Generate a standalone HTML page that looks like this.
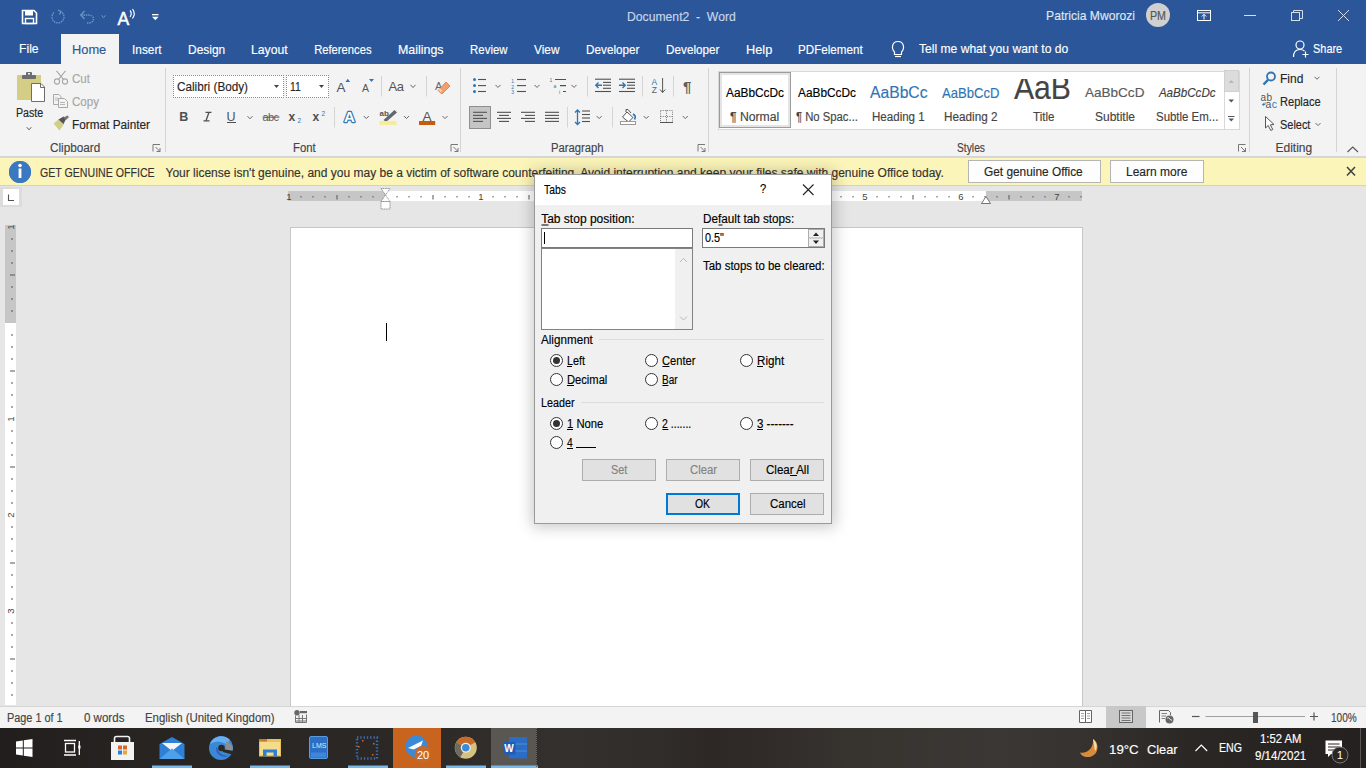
<!DOCTYPE html>
<html><head><meta charset="utf-8"><title>Document2 - Word</title>
<style>
html,body{margin:0;padding:0}
body{width:1366px;height:768px;overflow:hidden;position:relative;background:#e6e6e6;font-family:"Liberation Sans",sans-serif}
svg{overflow:visible}
div{-webkit-text-stroke:0.15px currentColor}
</style></head><body>
<div style="position:absolute;left:0px;top:0px;width:1366px;height:64px;background:#2b579a"></div>
<div style="position:absolute;left:61px;top:34px;width:58px;height:30px;background:#f3f3f3"></div>
<div style="position:absolute;left:627.00px;top:6.50px;line-height:20px;font:normal 400 13px/20px 'Liberation Sans';color:#c9d6ea;white-space:pre;transform:scaleX(0.9360);transform-origin:1.00px 0;">Document2  -  Word</div>
<div style="position:absolute;left:1046.00px;top:6.00px;line-height:20px;font:normal 400 13px/20px 'Liberation Sans';color:#dfe7f2;white-space:pre;transform:scaleX(0.9315);transform-origin:1.00px 0;">Patricia Mworozi</div>
<div style="position:absolute;left:1146px;top:3px;width:24px;height:24px;border-radius:50%;background:#d0d0d0"></div>
<div style="position:absolute;left:1150.00px;top:6.50px;line-height:18px;font:normal 400 12px/18px 'Liberation Sans';color:#555;white-space:pre;transform:scaleX(0.8887);transform-origin:-0.00px 0;">PM</div>
<div style="position:absolute;left:19.00px;top:38.50px;line-height:20px;font:normal 400 13px/20px 'Liberation Sans';color:#ffffff;white-space:pre;transform:scaleX(0.9332);transform-origin:1.00px 0;">File</div>
<div style="position:absolute;left:132.00px;top:39.70px;line-height:20px;font:normal 400 13px/20px 'Liberation Sans';color:#ffffff;white-space:pre;transform:scaleX(0.9091);transform-origin:1.00px 0;">Insert</div>
<div style="position:absolute;left:188.00px;top:39.70px;line-height:20px;font:normal 400 13px/20px 'Liberation Sans';color:#ffffff;white-space:pre;transform:scaleX(0.9175);transform-origin:1.00px 0;">Design</div>
<div style="position:absolute;left:251.00px;top:39.70px;line-height:20px;font:normal 400 13px/20px 'Liberation Sans';color:#ffffff;white-space:pre;transform:scaleX(0.9370);transform-origin:1.00px 0;">Layout</div>
<div style="position:absolute;left:314.00px;top:39.70px;line-height:20px;font:normal 400 13px/20px 'Liberation Sans';color:#ffffff;white-space:pre;transform:scaleX(0.8639);transform-origin:1.00px 0;">References</div>
<div style="position:absolute;left:398.00px;top:39.70px;line-height:20px;font:normal 400 13px/20px 'Liberation Sans';color:#ffffff;white-space:pre;transform:scaleX(0.9537);transform-origin:1.00px 0;">Mailings</div>
<div style="position:absolute;left:470.00px;top:39.70px;line-height:20px;font:normal 400 13px/20px 'Liberation Sans';color:#ffffff;white-space:pre;transform:scaleX(0.8760);transform-origin:1.00px 0;">Review</div>
<div style="position:absolute;left:534.00px;top:39.70px;line-height:20px;font:normal 400 13px/20px 'Liberation Sans';color:#ffffff;white-space:pre;transform:scaleX(0.9105);transform-origin:-0.00px 0;">View</div>
<div style="position:absolute;left:586.00px;top:39.70px;line-height:20px;font:normal 400 13px/20px 'Liberation Sans';color:#ffffff;white-space:pre;transform:scaleX(0.8994);transform-origin:1.00px 0;">Developer</div>
<div style="position:absolute;left:666.00px;top:39.70px;line-height:20px;font:normal 400 13px/20px 'Liberation Sans';color:#ffffff;white-space:pre;transform:scaleX(0.8994);transform-origin:1.00px 0;">Developer</div>
<div style="position:absolute;left:746.00px;top:39.70px;line-height:20px;font:normal 400 13px/20px 'Liberation Sans';color:#ffffff;white-space:pre;transform:scaleX(0.9801);transform-origin:1.00px 0;">Help</div>
<div style="position:absolute;left:798.00px;top:39.70px;line-height:20px;font:normal 400 13px/20px 'Liberation Sans';color:#ffffff;white-space:pre;transform:scaleX(0.8934);transform-origin:1.00px 0;">PDFelement</div>
<div style="position:absolute;left:72.00px;top:39.70px;line-height:20px;font:normal 400 13px/20px 'Liberation Sans';color:#2b579a;white-space:pre;transform:scaleX(0.9866);transform-origin:1.00px 0;">Home</div>
<div style="position:absolute;left:918.50px;top:39.00px;line-height:20px;font:normal 400 13px/20px 'Liberation Sans';color:#ffffff;white-space:pre;transform:scaleX(0.9302);transform-origin:-0.00px 0;">Tell me what you want to do</div>
<div style="position:absolute;left:1313.00px;top:39.00px;line-height:20px;font:normal 400 13px/20px 'Liberation Sans';color:#ffffff;white-space:pre;transform:scaleX(0.8416);transform-origin:-0.00px 0;">Share</div>
<div style="position:absolute;left:0px;top:64px;width:1366px;height:92px;background:#f3f3f3"></div>
<div style="position:absolute;left:0px;top:156px;width:1366px;height:1px;background:#d5d5d5"></div>
<div style="position:absolute;left:165px;top:68px;width:1px;height:84px;background:#d4d4d4"></div>
<div style="position:absolute;left:460px;top:68px;width:1px;height:84px;background:#d4d4d4"></div>
<div style="position:absolute;left:708px;top:68px;width:1px;height:84px;background:#d4d4d4"></div>
<div style="position:absolute;left:1249px;top:68px;width:1px;height:84px;background:#d4d4d4"></div>
<div style="position:absolute;left:1336px;top:68px;width:1px;height:84px;background:#d4d4d4"></div>
<div style="position:absolute;left:49.70px;top:139.00px;line-height:18px;font:normal 400 12px/18px 'Liberation Sans';color:#444;white-space:pre;transform:scaleX(0.9785);transform-origin:-0.00px 0;">Clipboard</div>
<div style="position:absolute;left:293.30px;top:139.00px;line-height:18px;font:normal 400 12px/18px 'Liberation Sans';color:#444;white-space:pre;transform:scaleX(0.9442);transform-origin:-0.00px 0;">Font</div>
<div style="position:absolute;left:550.50px;top:139.00px;line-height:18px;font:normal 400 12px/18px 'Liberation Sans';color:#444;white-space:pre;transform:scaleX(0.9392);transform-origin:-0.00px 0;">Paragraph</div>
<div style="position:absolute;left:956.50px;top:139.00px;line-height:18px;font:normal 400 12px/18px 'Liberation Sans';color:#444;white-space:pre;transform:scaleX(0.8569);transform-origin:-0.00px 0;">Styles</div>
<div style="position:absolute;left:1275.50px;top:139.00px;line-height:18px;font:normal 400 12px/18px 'Liberation Sans';color:#444;white-space:pre;">Editing</div>
<div style="position:absolute;left:15.50px;top:104.00px;line-height:18px;font:normal 400 12px/18px 'Liberation Sans';color:#262626;white-space:pre;transform:scaleX(0.8868);transform-origin:-0.00px 0;">Paste</div>
<div style="position:absolute;left:72.40px;top:69.50px;line-height:18px;font:normal 400 12px/18px 'Liberation Sans';color:#a6a6a6;white-space:pre;transform:scaleX(0.9566);transform-origin:-0.00px 0;">Cut</div>
<div style="position:absolute;left:72.40px;top:93.00px;line-height:18px;font:normal 400 12px/18px 'Liberation Sans';color:#a6a6a6;white-space:pre;transform:scaleX(0.9638);transform-origin:-0.00px 0;">Copy</div>
<div style="position:absolute;left:72.40px;top:116.00px;line-height:18px;font:normal 400 12px/18px 'Liberation Sans';color:#262626;white-space:pre;transform:scaleX(0.9828);transform-origin:-0.00px 0;">Format Painter</div>
<div style="position:absolute;left:173px;top:75px;width:109px;height:21px;background:#fff;border:1px dotted #8a8a8a"></div>
<div style="position:absolute;left:286px;top:75px;width:41px;height:21px;background:#fff;border:1px dotted #8a8a8a"></div>
<div style="position:absolute;left:176.50px;top:77.50px;line-height:18px;font:normal 400 12px/18px 'Liberation Sans';color:#262626;white-space:pre;transform:scaleX(0.9768);transform-origin:-0.00px 0;">Calibri (Body)</div>
<div style="position:absolute;left:289.60px;top:77.50px;line-height:18px;font:normal 400 12px/18px 'Liberation Sans';color:#262626;white-space:pre;transform:scaleX(0.8605);transform-origin:-0.00px 0;">11</div>
<div style="position:absolute;left:718px;top:71px;width:506px;height:57px;background:#fff;border:1px solid #d8d8d8"></div>
<div style="position:absolute;left:1224px;top:71px;width:14px;height:57px;background:#fff;border:1px solid #d8d8d8"></div>
<div style="position:absolute;left:719px;top:72px;width:70px;height:54px;border:1px solid #9c9c9c;box-shadow:inset 0 0 0 2px #e4e4e4"></div>
<div style="position:absolute;left:725.90px;top:83.50px;line-height:18px;font:normal 400 12px/18px 'Liberation Sans';color:#000;white-space:pre;transform:scaleX(0.9883);transform-origin:-0.00px 0;">AaBbCcDc</div>
<div style="position:absolute;left:797.70px;top:83.50px;line-height:18px;font:normal 400 12px/18px 'Liberation Sans';color:#000;white-space:pre;transform:scaleX(0.9883);transform-origin:-0.00px 0;">AaBbCcDc</div>
<div style="position:absolute;left:869.70px;top:79.50px;line-height:26px;font:normal 400 17px/26px 'Liberation Sans';color:#2e74b5;white-space:pre;transform:scaleX(0.9226);transform-origin:-0.00px 0;">AaBbCc</div>
<div style="position:absolute;left:941.80px;top:81.50px;line-height:22px;font:normal 400 15px/22px 'Liberation Sans';color:#2e74b5;white-space:pre;transform:scaleX(0.8709);transform-origin:-0.00px 0;">AaBbCcD</div>
<div style="position:absolute;left:1000px;top:78.5px;width:80px;height:30px;overflow:hidden">
<div style="position:absolute;left:13.50px;top:-16.00px;line-height:50px;font:normal 400 33px/50px 'Liberation Sans';color:#444;white-space:pre;transform:scaleX(0.9126);transform-origin:-0.00px 0;">AaB</div>
</div>
<div style="position:absolute;left:1085.40px;top:82.50px;line-height:20px;font:normal 400 13px/20px 'Liberation Sans';color:#5a5a5a;white-space:pre;transform:scaleX(1.0407);transform-origin:-0.00px 0;">AaBbCcD</div>
<div style="position:absolute;left:1159.00px;top:82.50px;line-height:20px;font:italic 400 13px/20px 'Liberation Sans';color:#404040;white-space:pre;transform:scaleX(0.8912);transform-origin:-1.00px 0;">AaBbCcDc</div>
<div style="position:absolute;left:730.00px;top:107.70px;line-height:18px;font:normal 400 12px/18px 'Liberation Sans';color:#444;white-space:pre;transform:scaleX(1.0171);transform-origin:-0.00px 0;">¶ Normal</div>
<div style="position:absolute;left:796.00px;top:107.70px;line-height:18px;font:normal 400 12px/18px 'Liberation Sans';color:#444;white-space:pre;transform:scaleX(0.9409);transform-origin:-0.00px 0;">¶ No Spac...</div>
<div style="position:absolute;left:872.00px;top:107.70px;line-height:18px;font:normal 400 12px/18px 'Liberation Sans';color:#444;white-space:pre;transform:scaleX(0.9630);transform-origin:-0.00px 0;">Heading 1</div>
<div style="position:absolute;left:944.40px;top:107.70px;line-height:18px;font:normal 400 12px/18px 'Liberation Sans';color:#444;white-space:pre;transform:scaleX(0.9776);transform-origin:-0.00px 0;">Heading 2</div>
<div style="position:absolute;left:1032.50px;top:108.00px;line-height:18px;font:normal 400 12px/18px 'Liberation Sans';color:#444;white-space:pre;transform:scaleX(0.9623);transform-origin:-0.00px 0;">Title</div>
<div style="position:absolute;left:1095.00px;top:108.00px;line-height:18px;font:normal 400 12px/18px 'Liberation Sans';color:#444;white-space:pre;">Subtitle</div>
<div style="position:absolute;left:1155.80px;top:108.00px;line-height:18px;font:normal 400 12px/18px 'Liberation Sans';color:#444;white-space:pre;transform:scaleX(0.9534);transform-origin:-0.00px 0;">Subtle Em...</div>
<div style="position:absolute;left:1280.00px;top:70.00px;line-height:18px;font:normal 400 12px/18px 'Liberation Sans';color:#262626;white-space:pre;">Find</div>
<div style="position:absolute;left:1280.00px;top:93.00px;line-height:18px;font:normal 400 12px/18px 'Liberation Sans';color:#262626;white-space:pre;transform:scaleX(0.9244);transform-origin:-0.00px 0;">Replace</div>
<div style="position:absolute;left:1280.00px;top:115.60px;line-height:18px;font:normal 400 12px/18px 'Liberation Sans';color:#262626;white-space:pre;transform:scaleX(0.9113);transform-origin:-0.00px 0;">Select</div>
<svg style="position:absolute;left:0;top:0" width="1366" height="768" viewBox="0 0 1366 768"><path d="M22.5 10.5 H34 L36.5 13 V23.5 H22.5 Z" fill="none" stroke="#fff" stroke-width="1.6"/><rect x="25" y="11" width="8" height="4.5" fill="#fff"/><rect x="25.5" y="18.5" width="8" height="5" fill="none" stroke="#fff" stroke-width="1.4"/><path d="M54 12.5 A6 6 0 1 0 60.5 11.5" fill="none" stroke="#6f94c7" stroke-width="1.3" stroke-dasharray="1.6 0.8"/><path d="M58 10 L61 11.5 L59.5 14.5" fill="none" stroke="#6f94c7" stroke-width="1.3"/><path d="M81 15 H89 A4.5 4 0 0 1 89 23 H87" fill="none" stroke="#6f94c7" stroke-width="1.3" stroke-dasharray="1.6 0.8"/><path d="M84.5 11 L80.8 15 L84.5 19" fill="none" stroke="#6f94c7" stroke-width="1.3"/><path d="M101.5 15.25 L103.5 17.75 L105.5 15.25" fill="none" stroke="#6f94c7" stroke-width="1"/><text x="117.5" y="25" font-family="Liberation Sans" font-size="17.5" fill="#fff" stroke="#fff" stroke-width="0.5">A</text><path d="M130 10.5 Q132.5 13.5 130 17" fill="none" stroke="#fff" stroke-width="1.2"/><path d="M132.5 9 Q136 13.5 132.5 18.5" fill="none" stroke="#fff" stroke-width="1.2"/><rect x="152" y="14" width="6.5" height="1.3" fill="#fff"/><path d="M152 16.8 H158.6 L155.3 20.2 Z" fill="#fff"/><rect x="1197.5" y="10.5" width="13" height="10" fill="none" stroke="#fff" stroke-width="1"/><path d="M1197.5 12.8 H1210.5" stroke="#fff" stroke-width="1"/><path d="M1204 19.5 V14.5 M1201.8 16.5 L1204 14.3 L1206.2 16.5" fill="none" stroke="#fff" stroke-width="1"/><path d="M1244 15.5 H1256" stroke="#d6deeb" stroke-width="1"/><rect x="1291.5" y="12.5" width="8" height="8" fill="none" stroke="#d6deeb" stroke-width="1"/><path d="M1293.5 12.5 V10.5 H1302.5 V18.5 H1299.5" fill="none" stroke="#d6deeb" stroke-width="1"/><path d="M1338 10 L1349 21 M1349 10 L1338 21" stroke="#d6deeb" stroke-width="1"/><path d="M894.5 52 C891 48.5 892 41.5 898 41.5 C904 41.5 905 48.5 901.5 52 V54.5 H894.5 Z" fill="none" stroke="#fff" stroke-width="1.2"/><path d="M895 56.5 H901" stroke="#fff" stroke-width="1.2"/><circle cx="1300" cy="45" r="4" fill="none" stroke="#fff" stroke-width="1.2"/><path d="M1293.5 57 C1293.5 51.5 1296.5 49.5 1300 49.5 C1302 49.5 1303.5 50 1304.5 51" fill="none" stroke="#fff" stroke-width="1.2"/><path d="M1305.5 51.5 V57.5 M1302.5 54.5 H1308.5" stroke="#fff" stroke-width="1.2"/><rect x="17" y="75" width="24" height="25" fill="#d4cd86"/><rect x="22" y="75" width="14" height="4" rx="1" fill="#6d6d6d"/><rect x="26" y="72" width="6" height="4" rx="1" fill="#6d6d6d"/><rect x="28" y="73" width="2" height="1.5" fill="#f3f3f3"/><path d="M31.5 83.5 H41 L44.5 87 V101.5 H31.5 Z" fill="#fff" stroke="#6d6d6d" stroke-width="1"/><path d="M40.5 83.5 V87.5 H44.5" fill="none" stroke="#6d6d6d" stroke-width="1"/><path d="M26.75 127.25 L29 129.75 L31.25 127.25" fill="none" stroke="#555" stroke-width="1"/><g fill="none" stroke="#a8a8a8" stroke-width="1.1"><circle cx="57" cy="81.5" r="2.6"/><circle cx="65" cy="81.5" r="2.6"/><path d="M58.5 79.3 L65.5 70.8 M63.5 79.3 L56.5 70.8"/></g><g fill="#f3f3f3" stroke="#a8a8a8" stroke-width="1"><path d="M53.5 94.5 H59 L61 96.5 V104.5 H53.5 Z"/><path d="M58.5 98.5 H64.5 L67.5 101.5 V107.5 H58.5 Z"/></g><path d="M55 98 H58 M55 100 H58 M60 102.5 H65 M60 104.5 H65" stroke="#a8a8a8" stroke-width="0.8"/><path d="M53.5 123.5 L59 119 L64 124 L59.5 130.5 Z" fill="#d4cd86"/><path d="M58.5 119.5 L63.5 116.5 L66 119 L63.5 124 Z" fill="#555"/><path d="M63.5 117.5 L67.5 115.5 L69 117 L66 120 Z" fill="#777"/><path d="M274 85 H279 L276.5 88 Z" fill="#444"/><path d="M319 85 H324 L321.5 88 Z" fill="#444"/><text x="336.5" y="92" font-family="Liberation Sans" font-size="13.5" fill="#555">A</text><path d="M345.5 82 L347.8 78.8 L350.1 82 Z" fill="#2e75b6"/><text x="362" y="92" font-family="Liberation Sans" font-size="10.5" fill="#555">A</text><path d="M369 79 H374 L371.5 82 Z" fill="#2e75b6"/><text x="388.5" y="90.5" font-family="Liberation Sans" font-size="13" fill="#555" textLength="15.5">Aa</text><path d="M410.5 84.8 L413 87.60000000000001 L415.5 84.8" fill="none" stroke="#666" stroke-width="1"/><text x="435" y="90" font-family="Liberation Sans" font-size="11" fill="#666">A</text><path d="M438 90.5 L446 82 L450 86 L442 94 Z" fill="#f0a070" stroke="#e07b3a" stroke-width="0.8"/><path d="M439 89 L441.5 91.5" stroke="#e9d9b0" stroke-width="2"/><text x="179.2" y="121" font-family="Liberation Sans" font-weight="700" font-size="12.5" fill="#505050">B</text><path d="M205.5 112.3 H211.5 M203.5 120.8 H209.5 M209 112.3 L206 120.8" fill="none" stroke="#505050" stroke-width="1.3"/><text x="226.5" y="120.8" font-family="Liberation Sans" font-size="12.5" fill="#505050">U</text><path d="M227 122.5 H236" stroke="#505050" stroke-width="1"/><path d="M247.5 116.25 L250 118.75 L252.5 116.25" fill="none" stroke="#666" stroke-width="1"/><text x="262.5" y="120.8" font-family="Liberation Sans" font-size="11" fill="#606060" textLength="16.5">abc</text><path d="M262.5 117.2 H279.5" stroke="#606060" stroke-width="1"/><text x="288.5" y="121" font-family="Liberation Sans" font-weight="700" font-size="12" fill="#505050">x</text><text x="297.5" y="123.3" font-family="Liberation Sans" font-size="6.5" fill="#2e75b6">2</text><text x="312.5" y="121" font-family="Liberation Sans" font-weight="700" font-size="12" fill="#505050">x</text><text x="321.5" y="115.5" font-family="Liberation Sans" font-size="6.5" fill="#2e75b6">2</text><path d="M334.5 107 V127.5" stroke="#d4d4d4" stroke-width="1"/><path d="M381.5 76 V96.5 M426.5 76 V96.5" stroke="#d4d4d4" stroke-width="1"/><text x="344" y="122" font-family="Liberation Sans" font-weight="700" font-size="15" fill="#fff" stroke="#2e75b6" stroke-width="2.4" stroke-linejoin="round" paint-order="stroke" textLength="11.5">A</text><path d="M363.8 116.05 L366.3 118.55 L368.8 116.05" fill="none" stroke="#666" stroke-width="1"/><text x="379.5" y="115.5" font-family="Liberation Sans" font-weight="700" font-size="8" fill="#555">ab</text><path d="M383.5 120 L394.5 110 L397 112.5 L386 122 Z" fill="#666"/><rect x="379.5" y="121" width="17" height="4" fill="#f6ec9c"/><path d="M404.0 116.05 L406.5 118.55 L409.0 116.05" fill="none" stroke="#666" stroke-width="1"/><text x="422.5" y="120.5" font-family="Liberation Sans" font-size="13.5" fill="#555">A</text><rect x="419" y="121" width="16.2" height="4" fill="#c55a11"/><path d="M442.5 116.05 L445 118.55 L447.5 116.05" fill="none" stroke="#666" stroke-width="1"/><path d="M451 151.5 V144.5 H458" fill="none" stroke="#777" stroke-width="1"/><path d="M453.5 147.0 L458 151.5 M458 148.0 V151.5 H454.5" fill="none" stroke="#777" stroke-width="1"/><circle cx="474.5" cy="79.5" r="1.5" fill="#2e75b6"/><circle cx="474.5" cy="85.6" r="1.5" fill="#2e75b6"/><circle cx="474.5" cy="91.5" r="1.5" fill="#2e75b6"/><path d="M478 79.5 H486" stroke="#505050" stroke-width="1.1"/><path d="M478 85.6 H486" stroke="#505050" stroke-width="1.1"/><path d="M478 91.5 H486" stroke="#505050" stroke-width="1.1"/><path d="M495.5 84.95 L498 87.45 L500.5 84.95" fill="none" stroke="#666" stroke-width="1"/><text x="511.3" y="82.5" font-family="Liberation Sans" font-size="5" fill="#2e75b6">1</text><text x="511.3" y="88.5" font-family="Liberation Sans" font-size="5" fill="#2e75b6">2</text><text x="511.3" y="94" font-family="Liberation Sans" font-size="5" fill="#2e75b6">3</text><path d="M517 79.5 H526" stroke="#505050" stroke-width="1.1"/><path d="M517 85.6 H526" stroke="#505050" stroke-width="1.1"/><path d="M517 91.5 H526" stroke="#505050" stroke-width="1.1"/><path d="M534.5 84.95 L537 87.45 L539.5 84.95" fill="none" stroke="#666" stroke-width="1"/><text x="549.5" y="82" font-family="Liberation Sans" font-size="5" fill="#2e75b6">1</text><text x="553.5" y="88" font-family="Liberation Sans" font-size="5" fill="#2e75b6">a</text><text x="559" y="94" font-family="Liberation Sans" font-size="5" fill="#2e75b6">i</text><path d="M555 79.5 H566 M560 85.6 H566 M563 91.5 H566" stroke="#505050" stroke-width="1.1"/><path d="M571.5 84.95 L574 87.45 L576.5 84.95" fill="none" stroke="#666" stroke-width="1"/><path d="M587.5 76 V96.5 M642.5 76 V96.5 M673.5 76 V96.5" stroke="#d4d4d4" stroke-width="1"/><path d="M595 79.2 H611" stroke="#505050" stroke-width="1.1"/><path d="M595 91.5 H611" stroke="#505050" stroke-width="1.1"/><path d="M603 82.4 H611" stroke="#505050" stroke-width="1.1"/><path d="M603 85.2 H611" stroke="#505050" stroke-width="1.1"/><path d="M603 88.3 H611" stroke="#505050" stroke-width="1.1"/><path d="M602 85.2 H596 M598.5 82.5 L595.8 85.2 L598.5 88" fill="none" stroke="#2e75b6" stroke-width="1.4"/><path d="M619 79.2 H635" stroke="#505050" stroke-width="1.1"/><path d="M619 91.5 H635" stroke="#505050" stroke-width="1.1"/><path d="M627 82.4 H635" stroke="#505050" stroke-width="1.1"/><path d="M627 85.2 H635" stroke="#505050" stroke-width="1.1"/><path d="M627 88.3 H635" stroke="#505050" stroke-width="1.1"/><path d="M619 85.2 H625 M622.5 82.5 L625.2 85.2 L622.5 88" fill="none" stroke="#2e75b6" stroke-width="1.4"/><text x="651.5" y="84.6" font-family="Liberation Sans" font-size="8.5" fill="#2e75b6">A</text><text x="651.8" y="93" font-family="Liberation Sans" font-size="8.5" fill="#606060">Z</text><path d="M662.6 78 V92.5 M660 89.5 L662.6 92.5 L665.2 89.5" fill="none" stroke="#555" stroke-width="1"/><text x="683" y="91.5" font-family="Liberation Sans" font-weight="700" font-size="15" fill="#606060">¶</text><rect x="469.5" y="106.5" width="21" height="22" fill="#c5c5c5" stroke="#8f8f8f" stroke-width="1"/><path d="M473 112.3 H487" stroke="#555" stroke-width="1.1"/><path d="M473 118.4 H487" stroke="#555" stroke-width="1.1"/><path d="M473 115.4 H483" stroke="#555" stroke-width="1.1"/><path d="M473 121.4 H483" stroke="#555" stroke-width="1.1"/><path d="M497 112.3 H511" stroke="#505050" stroke-width="1.1"/><path d="M497 118.4 H511" stroke="#505050" stroke-width="1.1"/><path d="M499 115.4 H509" stroke="#505050" stroke-width="1.1"/><path d="M499 121.4 H509" stroke="#505050" stroke-width="1.1"/><path d="M521 112.3 H535" stroke="#505050" stroke-width="1.1"/><path d="M521 118.4 H535" stroke="#505050" stroke-width="1.1"/><path d="M525 115.4 H535" stroke="#505050" stroke-width="1.1"/><path d="M525 121.4 H535" stroke="#505050" stroke-width="1.1"/><path d="M545 112.3 H559" stroke="#505050" stroke-width="1.1"/><path d="M545 115.4 H559" stroke="#505050" stroke-width="1.1"/><path d="M545 118.4 H559" stroke="#505050" stroke-width="1.1"/><path d="M545 121.4 H559" stroke="#505050" stroke-width="1.1"/><path d="M567.5 107 V127.5 M612.5 107 V127.5" stroke="#d4d4d4" stroke-width="1"/><path d="M577.5 110 V124.5 M575 112.5 L577.5 110 L580 112.5 M575 122 L577.5 124.5 L580 122" fill="none" stroke="#2e75b6" stroke-width="1.3"/><path d="M582 111 H590" stroke="#505050" stroke-width="1.1"/><path d="M582 114.5 H590" stroke="#505050" stroke-width="1.1"/><path d="M582 118 H590" stroke="#505050" stroke-width="1.1"/><path d="M582 121.5 H590" stroke="#505050" stroke-width="1.1"/><path d="M596.7 116.05 L599.2 118.55 L601.7 116.05" fill="none" stroke="#666" stroke-width="1"/><path d="M622.5 117 L627 112 L633 117.5 L628.5 122 Z" fill="#fff" stroke="#555" stroke-width="1"/><path d="M626 112 V109.5 H628 L631 113" fill="none" stroke="#555" stroke-width="1"/><path d="M633 114 Q636.5 116 634.5 119.5" fill="none" stroke="#2e75b6" stroke-width="1.6"/><rect x="620.5" y="121.5" width="15" height="3" fill="#fff" stroke="#999" stroke-width="1"/><path d="M643.7 116.05 L646.2 118.55 L648.7 116.05" fill="none" stroke="#666" stroke-width="1"/><g fill="none" stroke="#777" stroke-width="1" stroke-dasharray="1 1.2"><rect x="660.5" y="110.5" width="12" height="12"/><path d="M666.5 110.5 V122.5 M660.5 116.5 H672.5"/></g><path d="M660 122.5 H673" stroke="#555" stroke-width="1"/><path d="M682.8 116.05 L685.3 118.55 L687.8 116.05" fill="none" stroke="#666" stroke-width="1"/><path d="M698 151.5 V144.5 H705" fill="none" stroke="#777" stroke-width="1"/><path d="M700.5 147.0 L705 151.5 M705 148.0 V151.5 H701.5" fill="none" stroke="#777" stroke-width="1"/><rect x="1224.5" y="70.5" width="14" height="21" fill="#dcdcdc" stroke="#d0d0d0"/><path d="M1228.5 83 H1234 L1231.25 80 Z" fill="#b8b8b8"/><path d="M1228.5 99.5 H1234 L1231.25 102.5 Z" fill="#555"/><path d="M1228 116.5 H1234.5" stroke="#555" stroke-width="1"/><path d="M1228.5 118.5 H1234 L1231.25 121.5 Z" fill="#555"/><path d="M1238.5 151.5 V144.5 H1245.5" fill="none" stroke="#777" stroke-width="1"/><path d="M1241.0 147.0 L1245.5 151.5 M1245.5 148.0 V151.5 H1242.0" fill="none" stroke="#777" stroke-width="1"/><circle cx="1271" cy="76.5" r="4" fill="none" stroke="#2e75b6" stroke-width="1.8"/><path d="M1268 79.8 L1263.5 84.5" stroke="#2e75b6" stroke-width="2.4"/><path d="M1314.5 76.75 L1317 79.25 L1319.5 76.75" fill="none" stroke="#666" stroke-width="1"/><text x="1260.5" y="101" font-family="Liberation Sans" font-size="10" fill="#555" textLength="11.5">ab</text><text x="1265.5" y="108.3" font-family="Liberation Sans" font-size="10.5" fill="#555" textLength="11.5">a<tspan fill="#2e75b6">c</tspan></text><path d="M1265 102.5 V104.5 H1262.5 M1263.8 103.2 L1262.3 104.5 L1263.8 105.8" fill="none" stroke="#2e75b6" stroke-width="0.9"/><path d="M1265.5 116.5 V128 L1268.2 125.5 L1270.8 130.5 L1272.8 129.5 L1270.3 124.8 L1274 124.5 Z" fill="#fff" stroke="#555" stroke-width="1"/><path d="M1315.5 123.05 L1318 125.55 L1320.5 123.05" fill="none" stroke="#666" stroke-width="1"/><path d="M1347.5 152 L1352.7 147 L1358 152" fill="none" stroke="#555" stroke-width="1.1"/><path d="M153 151.5 V144.5 H160" fill="none" stroke="#777" stroke-width="1"/><path d="M155.5 147.0 L160 151.5 M160 148.0 V151.5 H156.5" fill="none" stroke="#777" stroke-width="1"/></svg>
<div style="position:absolute;left:0px;top:157px;width:1366px;height:29px;background:#fcf5b9;border-top:1px solid #e8dd95;border-bottom:1px solid #e2d68c;box-sizing:border-box"></div>
<div style="position:absolute;left:9px;top:161px;width:22px;height:22px;border-radius:50%;background:#3b78c3"></div>
<div style="position:absolute;left:40.40px;top:163.60px;line-height:18px;font:normal 400 12px/18px 'Liberation Sans';color:#333;white-space:pre;transform:scaleX(0.8831);transform-origin:-0.00px 0;">GET GENUINE OFFICE</div>
<div style="position:absolute;left:165.50px;top:163.60px;line-height:18px;font:normal 400 12px/18px 'Liberation Sans';color:#333;white-space:pre;">Your license isn't genuine, and you may be a victim of software counterfeiting. Avoid interruption and keep your files safe with genuine Office today.</div>
<div style="position:absolute;left:968px;top:160px;width:133px;height:23px;background:#fdfdfd;border:1px solid #b5b5b5;box-sizing:border-box"></div>
<div style="position:absolute;left:1110px;top:160px;width:94px;height:23px;background:#fdfdfd;border:1px solid #b5b5b5;box-sizing:border-box"></div>
<div style="position:absolute;left:984.00px;top:162.50px;line-height:18px;font:normal 400 12px/18px 'Liberation Sans';color:#262626;white-space:pre;transform:scaleX(0.9883);transform-origin:-0.00px 0;">Get genuine Office</div>
<div style="position:absolute;left:1126.00px;top:162.50px;line-height:18px;font:normal 400 12px/18px 'Liberation Sans';color:#262626;white-space:pre;">Learn more</div>
<div style="position:absolute;left:0px;top:187px;width:22px;height:20px;background:#dcdcdc"></div>
<div style="position:absolute;left:3px;top:189px;width:16px;height:16px;background:#fff"></div>
<div style="position:absolute;left:288px;top:191px;width:794px;height:10px;background:#fff"></div>
<div style="position:absolute;left:288px;top:191px;width:97px;height:10px;background:#c6c6c6"></div>
<div style="position:absolute;left:986px;top:191px;width:96px;height:10px;background:#c6c6c6"></div>
<div style="position:absolute;left:5px;top:225px;width:11px;height:480px;background:#fff"></div>
<div style="position:absolute;left:5px;top:225px;width:11px;height:98px;background:#c6c6c6"></div>
<div style="position:absolute;left:290px;top:227px;width:793px;height:479px;background:#fff;border:1px solid #c6c6c6;border-bottom:none;box-sizing:border-box"></div>
<div style="position:absolute;left:386px;top:323px;width:1px;height:18px;background:#000"></div>
<div style="position:absolute;left:0px;top:706px;width:1366px;height:22px;background:#f3f3f3;border-top:1px solid #d5d5d5;box-sizing:border-box"></div>
<div style="position:absolute;left:7.40px;top:708.60px;line-height:18px;font:normal 400 12px/18px 'Liberation Sans';color:#444;white-space:pre;transform:scaleX(0.9059);transform-origin:-0.00px 0;">Page 1 of 1</div>
<div style="position:absolute;left:84.20px;top:708.60px;line-height:18px;font:normal 400 12px/18px 'Liberation Sans';color:#444;white-space:pre;transform:scaleX(0.9615);transform-origin:-0.00px 0;">0 words</div>
<div style="position:absolute;left:144.80px;top:708.60px;line-height:18px;font:normal 400 12px/18px 'Liberation Sans';color:#444;white-space:pre;transform:scaleX(0.9524);transform-origin:-0.00px 0;">English (United Kingdom)</div>
<div style="position:absolute;left:1106px;top:706px;width:40px;height:22px;background:#c8c8c8"></div>
<div style="position:absolute;left:1331.00px;top:708.60px;line-height:18px;font:normal 400 12px/18px 'Liberation Sans';color:#444;white-space:pre;transform:scaleX(0.8381);transform-origin:-0.00px 0;">100%</div>
<div style="position:absolute;left:0px;top:728px;width:1366px;height:40px;background:linear-gradient(90deg,#221e1d 0px,#282422 150px,#2c2826 400px,#34302d 560px,#312d2b 650px,#2d2826 710px,#302b29 760px,#37332f 850px,#3b3734 1000px,#36322f 1080px,#2a2624 1200px,#252120 1366px)"></div>
<div style="position:absolute;left:393px;top:728px;width:48px;height:40px;background:#c8641e"></div>
<div style="position:absolute;left:491px;top:728px;width:45px;height:40px;background:#5a5753"></div>
<div style="position:absolute;left:1109.00px;top:739.50px;line-height:20px;font:normal 400 13px/20px 'Liberation Sans';color:#fff;white-space:pre;transform:scaleX(1.0224);transform-origin:-0.00px 0;">19°C</div>
<div style="position:absolute;left:1146.70px;top:739.50px;line-height:20px;font:normal 400 13px/20px 'Liberation Sans';color:#fff;white-space:pre;transform:scaleX(0.9863);transform-origin:-0.00px 0;">Clear</div>
<div style="position:absolute;left:1219.00px;top:739.00px;line-height:18px;font:normal 400 12px/18px 'Liberation Sans';color:#fff;white-space:pre;transform:scaleX(0.8843);transform-origin:-0.00px 0;">ENG</div>
<div style="position:absolute;left:1259.50px;top:729.80px;line-height:18px;font:normal 400 12px/18px 'Liberation Sans';color:#fff;white-space:pre;transform:scaleX(0.9397);transform-origin:-0.00px 0;">1:52 AM</div>
<div style="position:absolute;left:1254.50px;top:747.30px;line-height:18px;font:normal 400 12px/18px 'Liberation Sans';color:#fff;white-space:pre;transform:scaleX(0.9588);transform-origin:-0.00px 0;">9/14/2021</div>
<svg style="position:absolute;left:0;top:0" width="1366" height="768" viewBox="0 0 1366 768"><circle cx="20" cy="172" r="11" fill="#3a78c2"/><circle cx="20" cy="165.5" r="1.8" fill="#fff"/><rect x="18.6" y="168.5" width="2.8" height="9.5" fill="#fff"/><path d="M1347 167 L1355 175.5 M1355 167 L1347 175.5" stroke="#444" stroke-width="1.6"/><path d="M8.5 194.5 V200.5 H14" fill="none" stroke="#555" stroke-width="1.1"/><rect x="300.5" y="196" width="1" height="1.5" fill="#555"/><rect x="312.5" y="196" width="1" height="1.5" fill="#555"/><rect x="324.5" y="196" width="1" height="1.5" fill="#555"/><rect x="336.5" y="195" width="1" height="4.5" fill="#555"/><rect x="348.5" y="196" width="1" height="1.5" fill="#555"/><rect x="360.5" y="196" width="1" height="1.5" fill="#555"/><rect x="372.5" y="196" width="1" height="1.5" fill="#555"/><rect x="396.5" y="196" width="1" height="1.5" fill="#555"/><rect x="408.5" y="196" width="1" height="1.5" fill="#555"/><rect x="420.5" y="196" width="1" height="1.5" fill="#555"/><rect x="432.5" y="195" width="1" height="4.5" fill="#555"/><rect x="444.5" y="196" width="1" height="1.5" fill="#555"/><rect x="456.5" y="196" width="1" height="1.5" fill="#555"/><rect x="468.5" y="196" width="1" height="1.5" fill="#555"/><rect x="492.5" y="196" width="1" height="1.5" fill="#555"/><rect x="504.5" y="196" width="1" height="1.5" fill="#555"/><rect x="516.5" y="196" width="1" height="1.5" fill="#555"/><rect x="528.5" y="195" width="1" height="4.5" fill="#555"/><rect x="540.5" y="196" width="1" height="1.5" fill="#555"/><rect x="552.5" y="196" width="1" height="1.5" fill="#555"/><rect x="564.5" y="196" width="1" height="1.5" fill="#555"/><rect x="588.5" y="196" width="1" height="1.5" fill="#555"/><rect x="600.5" y="196" width="1" height="1.5" fill="#555"/><rect x="612.5" y="196" width="1" height="1.5" fill="#555"/><rect x="624.5" y="195" width="1" height="4.5" fill="#555"/><rect x="636.5" y="196" width="1" height="1.5" fill="#555"/><rect x="648.5" y="196" width="1" height="1.5" fill="#555"/><rect x="660.5" y="196" width="1" height="1.5" fill="#555"/><rect x="684.5" y="196" width="1" height="1.5" fill="#555"/><rect x="696.5" y="196" width="1" height="1.5" fill="#555"/><rect x="708.5" y="196" width="1" height="1.5" fill="#555"/><rect x="720.5" y="195" width="1" height="4.5" fill="#555"/><rect x="732.5" y="196" width="1" height="1.5" fill="#555"/><rect x="744.5" y="196" width="1" height="1.5" fill="#555"/><rect x="756.5" y="196" width="1" height="1.5" fill="#555"/><rect x="780.5" y="196" width="1" height="1.5" fill="#555"/><rect x="792.5" y="196" width="1" height="1.5" fill="#555"/><rect x="804.5" y="196" width="1" height="1.5" fill="#555"/><rect x="816.5" y="195" width="1" height="4.5" fill="#555"/><rect x="828.5" y="196" width="1" height="1.5" fill="#555"/><rect x="840.5" y="196" width="1" height="1.5" fill="#555"/><rect x="852.5" y="196" width="1" height="1.5" fill="#555"/><rect x="876.5" y="196" width="1" height="1.5" fill="#555"/><rect x="888.5" y="196" width="1" height="1.5" fill="#555"/><rect x="900.5" y="196" width="1" height="1.5" fill="#555"/><rect x="912.5" y="195" width="1" height="4.5" fill="#555"/><rect x="924.5" y="196" width="1" height="1.5" fill="#555"/><rect x="936.5" y="196" width="1" height="1.5" fill="#555"/><rect x="948.5" y="196" width="1" height="1.5" fill="#555"/><rect x="972.5" y="196" width="1" height="1.5" fill="#555"/><rect x="984.5" y="196" width="1" height="1.5" fill="#555"/><rect x="996.5" y="196" width="1" height="1.5" fill="#555"/><rect x="1008.5" y="195" width="1" height="4.5" fill="#555"/><rect x="1020.5" y="196" width="1" height="1.5" fill="#555"/><rect x="1032.5" y="196" width="1" height="1.5" fill="#555"/><rect x="1044.5" y="196" width="1" height="1.5" fill="#555"/><rect x="1068.5" y="196" width="1" height="1.5" fill="#555"/><rect x="1080.5" y="196" width="1" height="1.5" fill="#555"/><text x="289" y="200" text-anchor="middle" font-family="Liberation Sans" font-size="9.5" fill="#444">1</text><text x="481" y="200" text-anchor="middle" font-family="Liberation Sans" font-size="9.5" fill="#444">1</text><text x="577" y="200" text-anchor="middle" font-family="Liberation Sans" font-size="9.5" fill="#444">2</text><text x="673" y="200" text-anchor="middle" font-family="Liberation Sans" font-size="9.5" fill="#444">3</text><text x="769" y="200" text-anchor="middle" font-family="Liberation Sans" font-size="9.5" fill="#444">4</text><text x="865" y="200" text-anchor="middle" font-family="Liberation Sans" font-size="9.5" fill="#444">5</text><text x="961" y="200" text-anchor="middle" font-family="Liberation Sans" font-size="9.5" fill="#444">6</text><text x="1057" y="200" text-anchor="middle" font-family="Liberation Sans" font-size="9.5" fill="#444">7</text><path d="M381 188.5 H390 L385.5 195 Z M385.5 195 L381 201.5 H390 Z" fill="#fff" stroke="#777" stroke-width="0.8" stroke-dasharray="1.2 0.6"/><rect x="381" y="201.5" width="9" height="7.5" fill="#fff" stroke="#777" stroke-width="0.8" stroke-dasharray="1.2 0.6"/><path d="M981.5 203.5 H990.5 L986 196.5 Z" fill="#fff" stroke="#666" stroke-width="0.9"/><rect x="11" y="238.5" width="2" height="1" fill="#555"/><rect x="11" y="250.5" width="2" height="1" fill="#555"/><rect x="11" y="262.5" width="2" height="1" fill="#555"/><rect x="10" y="274.5" width="5" height="1" fill="#555"/><rect x="11" y="286.5" width="2" height="1" fill="#555"/><rect x="11" y="298.5" width="2" height="1" fill="#555"/><rect x="11" y="310.5" width="2" height="1" fill="#555"/><rect x="11" y="334.5" width="2" height="1" fill="#555"/><rect x="11" y="346.5" width="2" height="1" fill="#555"/><rect x="11" y="358.5" width="2" height="1" fill="#555"/><rect x="10" y="370.5" width="5" height="1" fill="#555"/><rect x="11" y="382.5" width="2" height="1" fill="#555"/><rect x="11" y="394.5" width="2" height="1" fill="#555"/><rect x="11" y="406.5" width="2" height="1" fill="#555"/><rect x="11" y="430.5" width="2" height="1" fill="#555"/><rect x="11" y="442.5" width="2" height="1" fill="#555"/><rect x="11" y="454.5" width="2" height="1" fill="#555"/><rect x="10" y="466.5" width="5" height="1" fill="#555"/><rect x="11" y="478.5" width="2" height="1" fill="#555"/><rect x="11" y="490.5" width="2" height="1" fill="#555"/><rect x="11" y="502.5" width="2" height="1" fill="#555"/><rect x="11" y="526.5" width="2" height="1" fill="#555"/><rect x="11" y="538.5" width="2" height="1" fill="#555"/><rect x="11" y="550.5" width="2" height="1" fill="#555"/><rect x="10" y="562.5" width="5" height="1" fill="#555"/><rect x="11" y="574.5" width="2" height="1" fill="#555"/><rect x="11" y="586.5" width="2" height="1" fill="#555"/><rect x="11" y="598.5" width="2" height="1" fill="#555"/><rect x="11" y="622.5" width="2" height="1" fill="#555"/><rect x="11" y="634.5" width="2" height="1" fill="#555"/><rect x="11" y="646.5" width="2" height="1" fill="#555"/><rect x="10" y="658.5" width="5" height="1" fill="#555"/><rect x="11" y="670.5" width="2" height="1" fill="#555"/><rect x="11" y="682.5" width="2" height="1" fill="#555"/><rect x="11" y="694.5" width="2" height="1" fill="#555"/><text x="0" y="0" transform="translate(14.3 227) rotate(-90)" text-anchor="middle" font-family="Liberation Sans" font-size="9.5" fill="#444">1</text><text x="0" y="0" transform="translate(14.3 419) rotate(-90)" text-anchor="middle" font-family="Liberation Sans" font-size="9.5" fill="#444">1</text><text x="0" y="0" transform="translate(14.3 515) rotate(-90)" text-anchor="middle" font-family="Liberation Sans" font-size="9.5" fill="#444">2</text><text x="0" y="0" transform="translate(14.3 611) rotate(-90)" text-anchor="middle" font-family="Liberation Sans" font-size="9.5" fill="#444">3</text><rect x="300" y="711" width="7" height="2.2" fill="#666"/><circle cx="297" cy="712.8" r="2.7" fill="#666"/><g fill="none" stroke="#777" stroke-width="1"><path d="M295.5 715.5 V722.5 H306.5 V714.5 M295.5 718.5 H306.5 M295.5 721 H306.5 M299 715 V722.5 M302.5 715 V722.5"/></g><path d="M1079.5 710.5 H1085.5 V722.5 H1079.5 Z M1085.5 710.5 H1091.5 V722.5 H1085.5 Z" fill="#fff" stroke="#666" stroke-width="1"/><path d="M1081 713.5 H1084 M1081 716 H1084 M1081 718.5 H1084 M1087 713.5 H1090 M1087 716 H1090 M1087 718.5 H1090" stroke="#888" stroke-width="0.8"/><rect x="1119.5" y="710.5" width="13" height="12" fill="#d8d8d8" stroke="#666" stroke-width="1"/><path d="M1121.5 713 H1130.5 M1121.5 715.5 H1130.5 M1121.5 718 H1130.5 M1121.5 720.5 H1130.5" stroke="#666" stroke-width="0.9"/><path d="M1159.5 722.5 V710.5 H1168.5 L1170.5 712.5 V715" fill="none" stroke="#666" stroke-width="1"/><path d="M1161.5 713.5 H1167 M1161.5 716 H1166 M1161.5 718.5 H1165" stroke="#777" stroke-width="0.9"/><circle cx="1169.5" cy="719.5" r="4" fill="#666"/><path d="M1167 718 Q1169 717 1170 719 Q1171 721 1172 720" stroke="#fff" stroke-width="0.8" fill="none"/><path d="M1192 716.5 H1199.5" stroke="#555" stroke-width="1.2"/><path d="M1205.5 716.5 H1305" stroke="#a0a0a0" stroke-width="1"/><rect x="1253" y="712" width="5" height="11" fill="#555"/><path d="M1310 716.5 H1318 M1314 712.5 V720.5" stroke="#555" stroke-width="1.2"/><path d="M16 741.5 L22.8 740.5 V747.5 H16 Z M23.8 740.3 L32.5 739 V747.5 H23.8 Z M16 748.5 H22.8 V755.5 L16 754.5 Z M23.8 748.5 H32.5 V757 L23.8 755.7 Z" fill="#fff"/><g fill="none" stroke="#fff" stroke-width="1.3"><path d="M64 740.5 H76 M64 755 H76"/><rect x="65.5" y="743.5" width="9" height="8.5"/><path d="M79.3 741 V755"/></g><rect x="78.3" y="745.5" width="2.2" height="3" fill="#fff"/><path d="M114.5 743 V738.5 Q114.5 736.5 116.5 736.5 H127.5 Q129.5 736.5 129.5 738.5 V743" fill="none" stroke="#f2f2f2" stroke-width="1.6"/><rect x="111" y="742" width="23" height="18" fill="#f2f2f2"/><rect x="118" y="745.5" width="4" height="4" fill="#d8662a"/><rect x="123" y="745.5" width="4" height="4" fill="#d8662a"/><rect x="118" y="750.5" width="4" height="4" fill="#2d7fd4"/><rect x="123" y="750.5" width="4" height="4" fill="#e8a33a"/><path d="M159.5 744 L172 737 L184.5 744 V759 H159.5 Z" fill="#2f7fd6"/><path d="M162 743 H182 L172 751 Z" fill="#f5f5f5"/><path d="M159.5 759 L172 748.5 L184.5 759 Z" fill="#4da1ea"/><circle cx="221" cy="748" r="12" fill="#3b88d6"/><path d="M210 744 A12 12 0 0 1 230 740 L226 744 Q218 739 210 744 Z" fill="#69aef0"/><path d="M226 741 A12 12 0 0 1 233 748 A12 12 0 0 1 231 753 L225 751 Z" fill="#8a8f95"/><path d="M216 748 Q216 756 225 757 L231 755 Q219 758 217 747 Z" fill="#2a62b8"/><circle cx="221.5" cy="748" r="3.3" fill="#2c2826"/><path d="M222 749 L234 751 V755 L223 752 Z" fill="#2c2826"/><rect x="259" y="739" width="22" height="17.5" fill="#e8c15a"/><rect x="259" y="739" width="8" height="2.5" fill="#c87a2e"/><rect x="260" y="742" width="20" height="13" fill="#f4dd8a"/><path d="M263 756.5 V749.5 H277 V756.5 H273.5 V752.5 H266.5 V756.5 Z" fill="#2f7fd6"/><rect x="309.5" y="736.5" width="18" height="22" rx="1.5" fill="#2c6fc4" stroke="#5a9be0"/><text x="312" y="748" font-family="Liberation Sans" font-size="7" fill="#dde8f5">LMS</text><rect x="311" y="752.5" width="15" height="5" fill="#3d86d8"/><g fill="none" stroke-width="2.4" stroke-dasharray="1.3 2"><rect x="357" y="737.5" width="20" height="21" stroke="#3b6fb5"/></g><g fill="#d8662a"><rect x="362" y="740" width="1.5" height="1.5"/><rect x="373" y="743" width="1.5" height="1.5"/><rect x="358" y="746" width="1.5" height="1.5"/><rect x="372" y="754" width="1.5" height="1.5"/></g><rect x="152" y="765.5" width="40" height="2.5" fill="#76b9ed"/><rect x="250" y="765.5" width="40" height="2.5" fill="#76b9ed"/><rect x="348" y="765.5" width="40" height="2.5" fill="#76b9ed"/><rect x="446" y="765.5" width="40" height="2.5" fill="#76b9ed"/><rect x="491" y="765.5" width="47" height="2.5" fill="#76b9ed"/><circle cx="416.5" cy="746.5" r="11" fill="#3a8ad6"/><path d="M408 748 L423 740.5 L421 746 L413.5 749.5 Z" fill="#fff"/><circle cx="423" cy="754.5" r="8.5" fill="#c8692a"/><text x="423" y="758.8" text-anchor="middle" font-family="Liberation Sans" font-size="11" fill="#fff">20</text><circle cx="465.8" cy="747.7" r="11" fill="#d5c27e"/><path d="M465.8 747.7 L456.3 742.2 A11 11 0 0 1 475.3 742.2 Z" fill="#c96a28"/><path d="M465.8 747.7 L456.3 742.2 A11 11 0 0 0 460.3 757.2 Z" fill="#6b6b60"/><circle cx="465.8" cy="747.7" r="5" fill="#f2f2f2"/><circle cx="465.8" cy="747.7" r="3.8" fill="#3d8ad8"/><rect x="509" y="737" width="18" height="21.5" rx="1" fill="#2b6cc4"/><path d="M509 744 H527 M509 751 H527" stroke="#4d8fe0" stroke-width="1"/><rect x="503" y="742" width="12.5" height="12.5" fill="#1d5db8"/><text x="504.2" y="752.3" font-family="Liberation Sans" font-weight="700" font-size="10" fill="#fff">W</text><path d="M536.5 728 V768" stroke="#6a6a6a" stroke-width="1" stroke-dasharray="1 1"/><path d="M1093 739 C1100 743 1099 756 1089 757 C1084 757.5 1081 755 1080 752.5 C1087 754 1094 748 1093 739 Z" fill="#d98a3a"/><path d="M1093 739 C1097 742 1098 748 1095 751 C1094 747 1094 743 1093 739 Z" fill="#f1dcaa"/><path d="M1195.5 751 L1201.3 745 L1207.2 751" fill="none" stroke="#fff" stroke-width="1.2"/><path d="M1325.5 740.5 H1342 V754 H1331 L1328 757 V754 H1325.5 Z" fill="#fff"/><path d="M1328 744 H1339.5 M1328 747 H1339.5 M1328 750 H1336" stroke="#2a2624" stroke-width="1.1"/><circle cx="1340" cy="755" r="8" fill="#2a2624" stroke="#777" stroke-width="1"/><text x="1340" y="759.3" text-anchor="middle" font-family="Liberation Sans" font-size="11.5" fill="#fff">1</text><path d="M1360.5 728 V768" stroke="#5a5654" stroke-width="1"/></svg>
<div style="position:absolute;left:535px;top:174px;width:297px;height:350px;box-shadow:0 0 14px 3px rgba(0,0,0,0.22)"></div>
<div style="position:absolute;left:534px;top:174px;width:298px;height:350px;background:#f0f0f0;border:1px solid #9a9a9a;box-sizing:border-box"></div>
<div style="position:absolute;left:535px;top:175px;width:296px;height:30px;background:#fff"></div>
<div style="position:absolute;left:543.60px;top:180.00px;line-height:20px;font:normal 400 13px/20px 'Liberation Sans';color:#000;white-space:pre;transform:scaleX(0.7940);transform-origin:-0.00px 0;">Tabs</div>
<div style="position:absolute;left:760.30px;top:179.00px;line-height:20px;font:normal 400 13px/20px 'Liberation Sans';color:#000;white-space:pre;transform:scaleX(0.8571);transform-origin:-0.00px 0;">?</div>
<div style="position:absolute;left:541.20px;top:210.20px;line-height:18px;font:normal 400 12px/18px 'Liberation Sans';color:#000;white-space:pre;">Tab stop position:</div>
<div style="position:absolute;left:702.70px;top:210.20px;line-height:18px;font:normal 400 12px/18px 'Liberation Sans';color:#000;white-space:pre;transform:scaleX(0.9769);transform-origin:-0.00px 0;">Default tab stops:</div>
<div style="position:absolute;left:541px;top:228px;width:152px;height:20px;background:#fff;border:1px solid #7a7a7a;box-sizing:border-box"></div>
<div style="position:absolute;left:541px;top:248px;width:152px;height:82px;background:#fff;border:1px solid #828282;box-sizing:border-box"></div>
<div style="position:absolute;left:675px;top:249px;width:17px;height:80px;background:#f0f0f0"></div>
<div style="position:absolute;left:702px;top:228px;width:123px;height:20px;background:#fff;border:1px solid #7a7a7a;box-sizing:border-box"></div>
<div style="position:absolute;left:544px;top:232px;width:1px;height:12px;background:#000"></div>
<div style="position:absolute;left:705.30px;top:229.00px;line-height:18px;font:normal 400 12px/18px 'Liberation Sans';color:#000;white-space:pre;transform:scaleX(0.9042);transform-origin:-0.00px 0;">0.5"</div>
<div style="position:absolute;left:702.70px;top:257.00px;line-height:18px;font:normal 400 12px/18px 'Liberation Sans';color:#000;white-space:pre;transform:scaleX(0.9545);transform-origin:-0.00px 0;">Tab stops to be cleared:</div>
<div style="position:absolute;left:541.20px;top:330.90px;line-height:18px;font:normal 400 12px/18px 'Liberation Sans';color:#000;white-space:pre;transform:scaleX(0.9717);transform-origin:-0.00px 0;">Alignment</div>
<div style="position:absolute;left:599px;top:339px;width:225px;height:1px;background:#dcdcdc"></div>
<div style="position:absolute;left:567.00px;top:352.00px;line-height:18px;font:normal 400 12px/18px 'Liberation Sans';color:#000;white-space:pre;transform:scaleX(0.9042);transform-origin:-0.00px 0;">Left</div>
<div style="position:absolute;left:662.40px;top:352.00px;line-height:18px;font:normal 400 12px/18px 'Liberation Sans';color:#000;white-space:pre;transform:scaleX(0.9272);transform-origin:-0.00px 0;">Center</div>
<div style="position:absolute;left:757.00px;top:352.00px;line-height:18px;font:normal 400 12px/18px 'Liberation Sans';color:#000;white-space:pre;transform:scaleX(0.9693);transform-origin:-0.00px 0;">Right</div>
<div style="position:absolute;left:567.00px;top:371.00px;line-height:18px;font:normal 400 12px/18px 'Liberation Sans';color:#000;white-space:pre;transform:scaleX(0.9303);transform-origin:-0.00px 0;">Decimal</div>
<div style="position:absolute;left:662.40px;top:371.00px;line-height:18px;font:normal 400 12px/18px 'Liberation Sans';color:#000;white-space:pre;transform:scaleX(0.8352);transform-origin:-0.00px 0;">Bar</div>
<div style="position:absolute;left:541.00px;top:394.00px;line-height:18px;font:normal 400 12px/18px 'Liberation Sans';color:#000;white-space:pre;transform:scaleX(0.8965);transform-origin:-0.00px 0;">Leader</div>
<div style="position:absolute;left:581px;top:402px;width:243px;height:1px;background:#dcdcdc"></div>
<div style="position:absolute;left:567.00px;top:415.10px;line-height:18px;font:normal 400 12px/18px 'Liberation Sans';color:#000;white-space:pre;transform:scaleX(0.9405);transform-origin:-0.00px 0;">1 None</div>
<div style="position:absolute;left:662.40px;top:415.10px;line-height:18px;font:normal 400 12px/18px 'Liberation Sans';color:#000;white-space:pre;transform:scaleX(0.8785);transform-origin:-0.00px 0;">2 .......</div>
<div style="position:absolute;left:757.00px;top:415.10px;line-height:18px;font:normal 400 12px/18px 'Liberation Sans';color:#000;white-space:pre;transform:scaleX(0.9609);transform-origin:-0.00px 0;">3 -------</div>
<div style="position:absolute;left:567.00px;top:434.20px;line-height:18px;font:normal 400 12px/18px 'Liberation Sans';color:#000;white-space:pre;transform:scaleX(0.8571);transform-origin:-0.00px 0;">4</div>
<div style="position:absolute;left:576px;top:447px;width:19.5px;height:1px;background:#000"></div>
<div style="position:absolute;left:550.0px;top:353.7px;width:11px;height:11px;border-radius:50%;background:#fff;border:1px solid #333"></div>
<div style="position:absolute;left:644.7px;top:353.7px;width:11px;height:11px;border-radius:50%;background:#fff;border:1px solid #333"></div>
<div style="position:absolute;left:740.0px;top:353.7px;width:11px;height:11px;border-radius:50%;background:#fff;border:1px solid #333"></div>
<div style="position:absolute;left:550.0px;top:372.7px;width:11px;height:11px;border-radius:50%;background:#fff;border:1px solid #333"></div>
<div style="position:absolute;left:644.7px;top:372.7px;width:11px;height:11px;border-radius:50%;background:#fff;border:1px solid #333"></div>
<div style="position:absolute;left:550.0px;top:416.7px;width:11px;height:11px;border-radius:50%;background:#fff;border:1px solid #333"></div>
<div style="position:absolute;left:644.7px;top:416.7px;width:11px;height:11px;border-radius:50%;background:#fff;border:1px solid #333"></div>
<div style="position:absolute;left:740.0px;top:416.7px;width:11px;height:11px;border-radius:50%;background:#fff;border:1px solid #333"></div>
<div style="position:absolute;left:550.0px;top:435.7px;width:11px;height:11px;border-radius:50%;background:#fff;border:1px solid #333"></div>
<div style="position:absolute;left:553.0px;top:356.7px;width:7px;height:7px;border-radius:50%;background:#333"></div>
<div style="position:absolute;left:553.0px;top:419.7px;width:7px;height:7px;border-radius:50%;background:#333"></div>
<div style="position:absolute;left:582px;top:459px;width:74px;height:22px;background:#e1e1e1;border:1px solid #adadad;box-sizing:border-box"></div>
<div style="position:absolute;left:610.50px;top:461.00px;line-height:18px;font:normal 400 12px/18px 'Liberation Sans';color:#838383;white-space:pre;transform:scaleX(0.9102);transform-origin:-0.00px 0;">Set</div>
<div style="position:absolute;left:666px;top:459px;width:74px;height:22px;background:#e1e1e1;border:1px solid #adadad;box-sizing:border-box"></div>
<div style="position:absolute;left:689.50px;top:461.00px;line-height:18px;font:normal 400 12px/18px 'Liberation Sans';color:#838383;white-space:pre;transform:scaleX(0.9414);transform-origin:-0.00px 0;">Clear</div>
<div style="position:absolute;left:750px;top:459px;width:74px;height:22px;background:#e1e1e1;border:1px solid #adadad;box-sizing:border-box"></div>
<div style="position:absolute;left:765.50px;top:461.00px;line-height:18px;font:normal 400 12px/18px 'Liberation Sans';color:#000;white-space:pre;transform:scaleX(0.9624);transform-origin:-0.00px 0;">Clear All</div>
<div style="position:absolute;left:750px;top:493px;width:74px;height:22px;background:#e1e1e1;border:1px solid #adadad;box-sizing:border-box"></div>
<div style="position:absolute;left:769.50px;top:495.00px;line-height:18px;font:normal 400 12px/18px 'Liberation Sans';color:#000;white-space:pre;transform:scaleX(0.9540);transform-origin:-0.00px 0;">Cancel</div>
<div style="position:absolute;left:666px;top:493px;width:74px;height:22px;background:#e1e1e1;border:2px solid #0078d7;box-sizing:border-box"></div>
<div style="position:absolute;left:695.00px;top:495.00px;line-height:18px;font:normal 400 12px/18px 'Liberation Sans';color:#000;white-space:pre;transform:scaleX(0.8654);transform-origin:-0.00px 0;">OK</div>
<svg style="position:absolute;left:0;top:0" width="1366" height="768" viewBox="0 0 1366 768"><path d="M803 184.5 L813.5 195 M813.5 184.5 L803 195" stroke="#222" stroke-width="1.1"/><rect x="808.5" y="229.5" width="15" height="17" fill="#f0f0f0" stroke="#adadad" stroke-width="1"/><path d="M808.5 238 H823.5" stroke="#adadad"/><path d="M813 236 H819 L816 232.5 Z M813 240.5 H819 L816 244 Z" fill="#222"/><path d="M680 262 L683.5 258.5 L687 262 M680 316.5 L683.5 320 L687 316.5" fill="none" stroke="#b8b8b8" stroke-width="1"/><rect x="541.5" y="224.5" width="7" height="1" fill="#000"/><rect x="718.5" y="224.5" width="4" height="1" fill="#000"/><rect x="567" y="366" width="5" height="1" fill="#000"/><rect x="662.4" y="366" width="7" height="1" fill="#000"/><rect x="757" y="366" width="6" height="1" fill="#000"/><rect x="567" y="385" width="7" height="1" fill="#000"/><rect x="662.4" y="385" width="6" height="1" fill="#000"/><rect x="567" y="429" width="6" height="1" fill="#000"/><rect x="662.4" y="429" width="6" height="1" fill="#000"/><rect x="757" y="429" width="6" height="1" fill="#000"/><rect x="567" y="448" width="6" height="1" fill="#000"/><rect x="790" y="475" width="7" height="1" fill="#000"/></svg>
</body></html>
